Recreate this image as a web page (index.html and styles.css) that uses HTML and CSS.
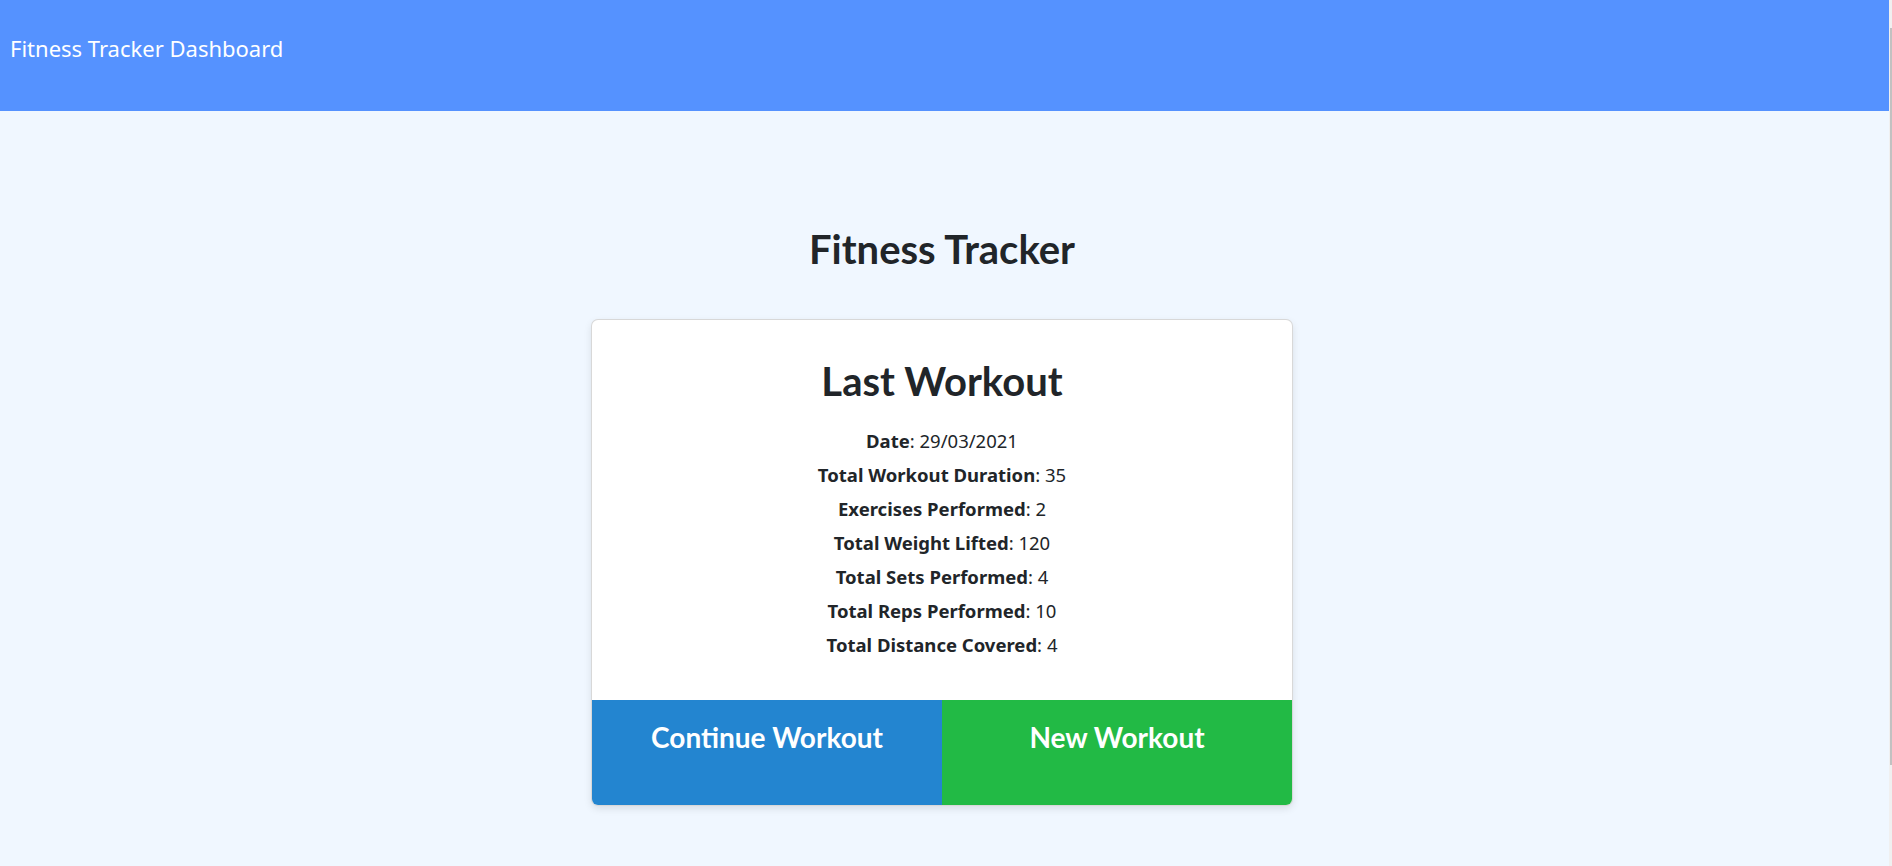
FILE: index.html
```html
<!DOCTYPE html>
<html lang="en">
<head>
<meta charset="utf-8">
<title>Fitness Tracker Dashboard</title>
<link rel="stylesheet" href="styles.css">
</head>
<body>
<div class="page">
  <header class="navbar">
    <span class="brand">Fitness Tracker Dashboard</span>
  </header>
  <main class="main">
    <h1 class="title">Fitness Tracker</h1>
    <section class="card">
      <div class="card-body">
        <h2 class="card-title">Last Workout</h2>
        <ul class="stats">
          <li><strong>Date</strong>: 29/03/2021</li>
          <li><strong>Total Workout Duration</strong>: 35</li>
          <li><strong>Exercises Performed</strong>: 2</li>
          <li><strong>Total Weight Lifted</strong>: 120</li>
          <li><strong>Total Sets Performed</strong>: 4</li>
          <li><strong>Total Reps Performed</strong>: 10</li>
          <li><strong>Total Distance Covered</strong>: 4</li>
        </ul>
      </div>
      <div class="actions">
        <a class="btn btn-continue" href="#">Continue Workout</a>
        <a class="btn btn-new" href="#">New Workout</a>
      </div>
    </section>
  </main>
</div>
<div class="scrollbar"><div class="thumb"></div></div>
</body>
</html>
```

FILE: styles.css
```css
* { box-sizing: border-box; }
html, body { margin: 0; padding: 0; }
body {
  background: #f0f7ff;
  color: #212529;
  font-family: "Segoe UI", "Noto Sans", sans-serif;
  height: 866px;
  overflow: hidden;
}
.page {
  width: 1889px;
}
.navbar {
  height: 111px;
  background: #5592ff;
  padding: 30px 0 0 10px;
}
.brand {
  color: #ffffff;
  font-size: 22px;
  line-height: 36px;
  display: block;
}
.main {
  width: 1884px;
  padding-top: 114px;
}
.title {
  margin: 0;
  text-align: center;
  font-family: "Lato", sans-serif;
  font-weight: 700;
  font-size: 40px;
  line-height: 48px;
  color: #212529;
}
.card {
  width: 700px;
  margin: 47px auto 0;
  background: #ffffff;
  border-radius: 6px;
  overflow: hidden;
  box-shadow: 0 0 0 1px #d8d8d8, 0 3px 8px rgba(0, 0, 0, 0.12);
}
.card-body {
  padding: 37px 20px 38px;
  text-align: center;
}
.card-title {
  margin: 0 0 19px;
  font-family: "Lato", sans-serif;
  font-weight: 700;
  font-size: 40px;
  line-height: 48px;
}
.stats {
  list-style: none;
  margin: 0;
  padding: 0;
  font-size: 18.5px;
  line-height: 34px;
}
.stats strong { font-weight: 700; }
.actions {
  display: flex;
  height: 105px;
}
.btn {
  flex: 1;
  color: #ffffff;
  text-decoration: none;
  text-align: center;
  font-family: "Lato", sans-serif;
  font-weight: 700;
  font-size: 28px;
  line-height: 34px;
  padding-top: 20px;
}
.btn-continue { background: #2385d0; }
.btn-new { background: #22ba45; }
.scrollbar {
  position: fixed;
  top: 0;
  right: 0;
  width: 3px;
  height: 866px;
  background: #f0f0f0;
}
.thumb {
  margin-top: 28px;
  margin-left: 1px;
  width: 2px;
  height: 737px;
  background: #c1c1c1;
}
```
